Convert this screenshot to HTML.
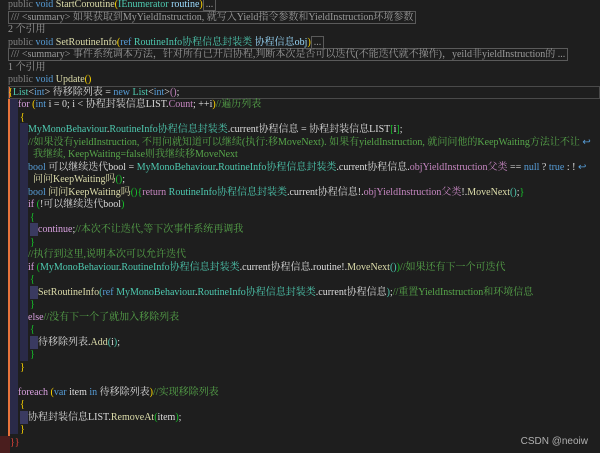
<!DOCTYPE html>
<html><head><meta charset="utf-8"><style>
body{margin:0;width:600px;height:453px;background:#1e1e1e;overflow:hidden;position:relative;font-family:"Liberation Serif","Noto Serif CJK SC",serif;font-size:10px;color:#dcdcdc}
.l{position:absolute;left:0;height:12.5px;line-height:12.5px;white-space:nowrap}
.k{color:#569cd6}.p{color:#d8a0df}.t{color:#4ec9b0}.m{color:#dcdcaa}.c{color:#57a64a}.g{color:#9a9a9a}.y{color:#ffd700}.v{color:#9cdcfe}.o{color:#c586c0}.gr{color:#17c42b}.dg{color:#808080}
.box{border:1px solid #5a5a5a;padding:0 2px}
.r{position:absolute}
</style></head><body>
<div class="r" style="left:8px;top:86px;width:2px;height:367px;background:#e8743b"></div>
<div class="r" style="left:10px;top:98px;width:8px;height:336px;background:#2a2a48"></div>
<div class="r" style="left:20px;top:123px;width:8px;height:238px;background:#2a2a48"></div>
<div class="r" style="left:30px;top:223px;width:8px;height:13px;background:#3a3a60"></div>
<div class="r" style="left:30px;top:286px;width:8px;height:13px;background:#3a3a60"></div>
<div class="r" style="left:30px;top:336px;width:8px;height:13px;background:#3a3a60"></div>
<div class="r" style="left:20px;top:411px;width:8px;height:13px;background:#3a3a60"></div>
<div class="r" style="left:0;top:436px;width:10px;height:17px;background:#4a1e1e"></div>
<div class="r" style="left:8px;top:86px;width:590px;height:11px;border:1px solid #4a4a4a"></div>

<div class="l" style="top:-1px;left:8px"><span class="dg">public</span> <span class="k">void</span> <span class="m">StartCoroutine</span><span class="y">(</span><span class="t">IEnumerator</span> <span class="v">routine</span><span class="y">)</span><span class="box g">...</span></div>
<div class="l" style="top:11.5px;left:8px"><span class="box g">/// &lt;summary&gt; 如果获取到MyYieldInstruction, 就写入Yield指令参数和YieldInstruction环境参数</span></div>
<div class="l g" style="top:24px;left:8px">2 个引用</div>
<div class="l" style="top:36.5px;left:8px"><span class="dg">public</span> <span class="k">void</span> <span class="m">SetRoutineInfo</span><span class="y">(</span><span class="k">ref</span> <span class="t">RoutineInfo协程信息封装类</span> <span class="v">协程信息obj</span><span class="y">)</span><span class="box g">...</span></div>
<div class="l" style="top:49px;left:8px"><span class="box g">/// &lt;summary&gt; 事件系统调本方法，针对所有已开启协程,判断本次是否可以迭代(不能迭代就不操作)，yeild非yieldInstruction的 ...</span></div>
<div class="l g" style="top:61.5px;left:8px">1 个引用</div>
<div class="l" style="top:74px;left:8px"><span class="dg">public</span> <span class="k">void</span> <span class="m">Update</span><span class="y">()</span></div>
<div class="l" style="top:86.5px;left:8px"><span class="y">{</span><span class="t">List</span>&lt;<span class="k">int</span>&gt; 待移除列表 = <span class="k">new</span> <span class="t">List</span>&lt;<span class="k">int</span>&gt;<span class="o">()</span>;</div>
<div class="l" style="top:99px;left:18px"><span class="p">for</span> <span class="y">(</span><span class="k">int</span> i = 0; i &lt; 协程封装信息LIST.<span class="o">Count</span>; ++i<span class="y">)</span><span class="c">//遍历列表</span></div>
<div class="l y" style="top:111.5px;left:20px">{</div>
<div class="l" style="top:124px;left:28px"><span class="t">MyMonoBehaviour</span>.<span class="t">RoutineInfo协程信息封装类</span>.current协程信息 = 协程封装信息LIST<span class="gr">[</span>i<span class="gr">]</span>;</div>
<div class="l c" style="top:136.5px;left:28px">//如果没有yieldInstruction, 不用问就知道可以继续(执行:移MoveNext). 如果有yieldInstruction, 就问问他的KeepWaiting方法让不让 <span class="k">↩</span></div>
<div class="l c" style="top:149px;left:33px">我继续, KeepWaiting=false则我继续移MoveNext</div>
<div class="l" style="top:161.5px;left:28px"><span class="k">bool</span> 可以继续迭代bool = <span class="t">MyMonoBehaviour</span>.<span class="t">RoutineInfo协程信息封装类</span>.current协程信息.<span class="o">objYieldInstruction父类</span> == <span class="k">null</span> ? <span class="k">true</span> : ! <span class="k">↩</span></div>
<div class="l" style="top:174px;left:33px"><span class="m">问问KeepWaiting吗</span><span class="gr">()</span>;</div>
<div class="l" style="top:186.5px;left:28px"><span class="k">bool</span> <span class="m">问问KeepWaiting吗</span><span class="gr">(){</span><span class="o">return</span> <span class="t">RoutineInfo协程信息封装类</span>.current协程信息!.<span class="o">objYieldInstruction父类</span>!.<span class="m">MoveNext</span><span class="t">()</span>;<span class="gr">}</span></div>
<div class="l" style="top:199px;left:28px"><span class="p">if</span> <span class="gr">(</span>!可以继续迭代bool<span class="gr">)</span></div>
<div class="l gr" style="top:211.5px;left:30px">{</div>
<div class="l" style="top:224px;left:38px"><span class="p">continue</span>;<span class="c">//本次不让迭代,等下次事件系统再调我</span></div>
<div class="l gr" style="top:236.5px;left:30px">}</div>
<div class="l c" style="top:249px;left:28px">//执行到这里,说明本次可以允许迭代</div>
<div class="l" style="top:261.5px;left:28px"><span class="p">if</span> <span class="gr">(</span><span class="t">MyMonoBehaviour</span>.<span class="t">RoutineInfo协程信息封装类</span>.current协程信息.routine!.<span class="m">MoveNext</span><span class="t">()</span><span class="gr">)</span><span class="c">//如果还有下一个可迭代</span></div>
<div class="l gr" style="top:274px;left:30px">{</div>
<div class="l" style="top:286.5px;left:38px"><span class="m">SetRoutineInfo</span><span class="t">(</span><span class="k">ref</span> <span class="t">MyMonoBehaviour</span>.<span class="t">RoutineInfo协程信息封装类</span>.current协程信息<span class="t">)</span>;<span class="c">//重置YieldInstruction和环境信息</span></div>
<div class="l gr" style="top:299px;left:30px">}</div>
<div class="l" style="top:311.5px;left:28px"><span class="p">else</span><span class="c">//没有下一个了就加入移除列表</span></div>
<div class="l gr" style="top:324px;left:30px">{</div>
<div class="l" style="top:336.5px;left:38px">待移除列表.<span class="m">Add</span><span class="t">(</span>i<span class="t">)</span>;</div>
<div class="l gr" style="top:349px;left:30px">}</div>
<div class="l y" style="top:361.5px;left:20px">}</div>
<div class="l" style="top:386.5px;left:18px"><span class="p">foreach</span> <span class="y">(</span><span class="k">var</span> item <span class="k">in</span> 待移除列表<span class="y">)</span><span class="c">//实现移除列表</span></div>
<div class="l y" style="top:399px;left:20px">{</div>
<div class="l" style="top:411.5px;left:28px">协程封装信息LIST.<span class="m">RemoveAt</span><span class="gr">(</span>item<span class="gr">)</span>;</div>
<div class="l y" style="top:424px;left:20px">}</div>
<div class="l" style="top:436.5px;left:10px;color:#e0443a">}}</div>
<div class="r" style="right:12px;top:436px;font-family:'Liberation Sans',sans-serif;font-size:10px;color:#b0b0b0">CSDN @neoiw</div>
</body></html>
